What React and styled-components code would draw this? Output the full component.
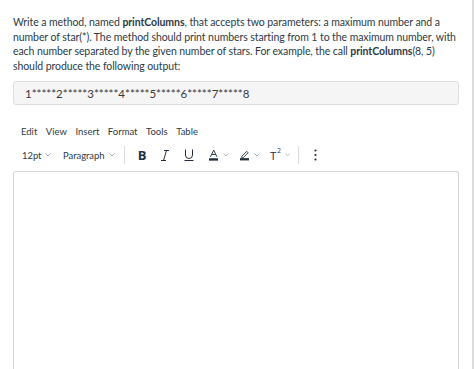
import React from "react";
import styled, { createGlobalStyle } from "styled-components";

const Global = createGlobalStyle`
  html, body { margin: 0; padding: 0; background: #fff; }
  body { font-family: Lato, "Noto Sans", sans-serif; color: #2d3b45; overflow: hidden; }
`;

const Page = styled.div`
  width: 474px;
  height: 369px;
  display: flex;
  overflow: hidden;
`;

const Main = styled.div`
  flex: 1;
  padding: 15px 13px 0 13px;
  display: flex;
  flex-direction: column;
`;

const RightRail = styled.div`
  width: 2px;
  background: #dcdcdc;
`;

const Question = styled.p`
  margin: 0;
  font-size: 10.5px;
  letter-spacing: -0.08px;
  line-height: 14.5px;
  color: #2d3b45;
  white-space: nowrap;
  b { font-weight: 700; }
`;

const CodeBox = styled.div`
  margin-top: 8px;
  height: 24px;
  box-sizing: border-box;
  border: 1px solid #dedede;
  border-radius: 3px;
  background: #f5f5f5;
  padding: 0 11px;
  display: flex;
  align-items: center;
  font-size: 11.5px;
  color: #3a3a3a;
`;

const MenuBar = styled.div`
  margin-top: 18px;
  display: flex;
  gap: 8.5px;
  padding-left: 8px;
  font-size: 9.5px;
  color: #2d3b45;
  height: 16px;
  align-items: center;
`;

const ToolBar = styled.div`
  margin-top: 8px;
  height: 16px;
  display: flex;
  align-items: center;
  padding-left: 9px;
  font-size: 9.4px;
  color: #2d3b45;
  padding-bottom: 8px;
`;

const Item = styled.div`
  display: flex;
  align-items: center;
  flex: none;
  gap: ${(p) => p.gap ?? 4}px;
  margin-right: ${(p) => p.mr || 0}px;
  width: ${(p) => (p.w ? p.w + "px" : "auto")};
  justify-content: ${(p) => (p.center ? "center" : "flex-start")};
`;

const Sep = styled.div`
  flex: none;
  width: 1px;
  height: 18px;
  background: #dcdcdc;
  margin: 0 ${(p) => p.r}px 0 ${(p) => p.l}px;
`;

const Editor = styled.div`
  flex: 1;
  border: 1px solid #d6d6d6;
  border-bottom: none;
  border-radius: 3px 3px 0 0;
`;

const Chevron = () => (
  <svg width="6" height="4" viewBox="0 0 6 4">
    <path d="M0.5 0.5 L3 3 L5.5 0.5" fill="none" stroke="#9aa3ab" strokeWidth="0.9" />
  </svg>
);

const Bold = styled.span`
  font-family: "Open Sans", Lato, sans-serif;
  font-weight: 700;
  font-size: 13px;
  color: #222f3e;
`;

const TLetter = styled.span`
  font-family: "Open Sans", sans-serif;
  font-size: 11.5px;
  color: #222f3e;
  display: flex;
  align-items: flex-start;
  sup { font-size: 6.5px; line-height: 6px; margin-left: 1px; }
`;

export default function App() {
  return (
    <Page>
      <Global />
      <Main>
        <Question>
          Write a method, named <b>printColumns</b>, that accepts two parameters: a maximum number and a<br />
          number of star(*). The method should print numbers starting from 1 to the maximum number, with<br />
          each number separated by the given number of stars. For example, the call <b>printColumns</b>(8, 5)<br />
          should produce the following output:
        </Question>
        <CodeBox>1*****2*****3*****4*****5*****6*****7*****8</CodeBox>
        <MenuBar>
          <span>Edit</span>
          <span>View</span>
          <span>Insert</span>
          <span>Format</span>
          <span>Tools</span>
          <span>Table</span>
        </MenuBar>
        <ToolBar>
          <Item w={41}>12pt <Chevron /></Item>
          <Item w={61}>Paragraph <Chevron /></Item>
          <Sep l={0} r={11} />
          <Item w={12} center mr={11}><Bold>B</Bold></Item>
          <Item w={12} center mr={11}>
            <svg width="8" height="11" viewBox="0 0 8 11">
              <path d="M3 0.5 H8 M0 10.5 H5 M5.5 0.5 L2.5 10.5" fill="none" stroke="#222f3e" strokeWidth="1" />
            </svg>
          </Item>
          <Item w={13} center mr={14}>
            <svg width="10" height="12" viewBox="0 0 10 12">
              <path d="M1.5 0.5 V6 a3.5 3.5 0 0 0 7 0 V0.5" fill="none" stroke="#222f3e" strokeWidth="1" />
              <path d="M0.5 11.5 H9.5" stroke="#222f3e" strokeWidth="1" />
            </svg>
          </Item>
          <Item w={20} gap={5} mr={11}>
            <svg width="10" height="12" viewBox="0 0 10 12">
              <path d="M1.5 8 L5 0.8 L8.5 8 M2.8 5.4 H7.2" fill="none" stroke="#222f3e" strokeWidth="1" />
              <rect x="0" y="9.5" width="10" height="2.5" fill="#222f3e" />
            </svg>
            <Chevron />
          </Item>
          <Item w={20} gap={5} mr={10}>
            <svg width="9" height="12" viewBox="0 0 10 12">
              <path d="M2 7.5 L7.5 2 L9 3.5 L3.5 9 H2 Z" fill="none" stroke="#222f3e" strokeWidth="1" />
              <rect x="0" y="9.5" width="10" height="2.5" fill="#222f3e" />
            </svg>
            <Chevron />
          </Item>
          <Item w={20} gap={4}>
            <TLetter>T<sup>2</sup></TLetter>
            <Chevron />
          </Item>
          <Sep l={8} r={15} />
          <Item>
            <svg width="3" height="12" viewBox="0 0 3 12">
              <circle cx="1.5" cy="1.5" r="1.1" fill="#222f3e" />
              <circle cx="1.5" cy="6" r="1.1" fill="#222f3e" />
              <circle cx="1.5" cy="10.5" r="1.1" fill="#222f3e" />
            </svg>
          </Item>
        </ToolBar>
        <Editor />
      </Main>
      <RightRail />
    </Page>
  );
}
